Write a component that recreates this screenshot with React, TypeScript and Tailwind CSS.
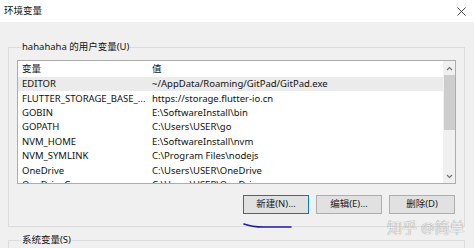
import React from "react";

const rows: [string, string][] = [
  ["EDITOR", "~/AppData/Roaming/GitPad/GitPad.exe"],
  ["FLUTTER_STORAGE_BASE_...", "https://storage.flutter-io.cn"],
  ["GOBIN", "E:\\SoftwareInstall\\bin"],
  ["GOPATH", "C:\\Users\\USER\\go"],
  ["NVM_HOME", "E:\\SoftwareInstall\\nvm"],
  ["NVM_SYMLINK", "C:\\Program Files\\nodejs"],
  ["OneDrive", "C:\\Users\\USER\\OneDrive"],
  ["OneDriveConsumer", "C:\\Users\\USER\\OneDrive"],
];

function Chevron({ up }: { up?: boolean }) {
  return (
    <svg width="7" height="5" viewBox="0 0 7 5">
      <path d={up ? "M1 4 L3.5 1.5 L6 4" : "M1 1 L3.5 3.5 L6 1"} fill="none" stroke="#707070" strokeWidth="1.1" />
    </svg>
  );
}

function Btn({ label, active }: { label: string; active?: boolean }) {
  return (
    <button
      className={
        active
          ? "w-[66px] h-[19px] bg-[#e1e1e1] border border-[#0078d7] text-[9.5px] text-[#222]"
          : "w-[66px] h-[19px] bg-[#e1e1e1] border border-[#adadad] text-[9.5px] text-[#222]"
      }
    >
      {label}
    </button>
  );
}

export default function App() {
  return (
    <div className="relative w-[474px] h-[248px] overflow-hidden bg-[#f0f0f0] font-['Noto_Sans','Noto_Sans_CJK_SC',sans-serif] text-[#111]">
      {/* title bar */}
      <div className="h-[22px] bg-white flex items-center justify-between pl-[4px] pr-[8px]">
        <span className="text-[9.5px]">环境变量</span>
        <svg width="9" height="9" viewBox="0 0 9 9">
          <path d="M0.5 0.5 L8.5 8.5 M8.5 0.5 L0.5 8.5" stroke="#333" strokeWidth="0.9" />
        </svg>
      </div>

      <div className="pl-[8px] pr-[9px] pt-[18px]">
        <fieldset className="border border-[#dcdcdc] h-[187px] px-[8px]">
          <legend className="ml-[4px] px-[1px] text-[9.5px] leading-[14px]">hahahaha 的用户变量(U)</legend>
          <div className="mt-[6px] h-[124px] border border-[#acacac] bg-white flex overflow-hidden">
            <div className="flex-1 overflow-hidden">
              <div className="grid grid-cols-[130px_1fr] h-[16px] items-center text-[9.5px]">
                <span className="pl-[4px]">变量</span>
                <span className="pl-[4px]">值</span>
              </div>
              {rows.map(([k, v], i) => (
                <div
                  key={k}
                  className={
                    i === 0
                      ? "grid grid-cols-[130px_1fr] h-[14.45px] items-center text-[9.5px] bg-[#ebebeb] whitespace-nowrap"
                      : "grid grid-cols-[130px_1fr] h-[14.45px] items-center text-[9.5px] whitespace-nowrap"
                  }
                >
                  <span className="pl-[4px]">{k}</span>
                  <span className="pl-[4px]">{v}</span>
                </div>
              ))}
            </div>
            <div className="w-[12px] bg-[#f0f0f0] flex flex-col items-center">
              <div className="h-[14px] flex items-center justify-center">
                <Chevron up />
              </div>
              <div className="w-[11px] h-[55px] bg-[#cdcdcd]" />
              <div className="flex-1" />
              <div className="h-[14px] flex items-center justify-center">
                <Chevron />
              </div>
            </div>
          </div>
          <div className="flex justify-end gap-[7px] pt-[11px] pr-[1px]">
            <Btn label="新建(N)..." active />
            <Btn label="编辑(E)..." />
            <Btn label="删除(D)" />
          </div>
        </fieldset>

        <fieldset className="mt-[6px] border border-[#dcdcdc] h-[40px] px-[8px]">
          <legend className="ml-[4px] px-[1px] text-[9.5px] leading-[14px]">系统变量(S)</legend>
        </fieldset>
      </div>

      {/* hand-drawn underline */}
      <svg className="absolute left-[243px] top-[222px]" width="50" height="8" viewBox="0 0 50 8">
        <path d="M1 2 Q 10 5.5 24 5 L 48 5" fill="none" stroke="#1c1ca6" strokeWidth="1.6" strokeLinecap="round" />
      </svg>

      {/* watermark */}
      <div className="absolute left-[387px] top-[217px] text-[15px] leading-[20px] text-[#ebebeb] [text-shadow:0_0_1px_rgba(0,0,0,0.5)] whitespace-nowrap">
        知乎 @简单
      </div>
    </div>
  );
}
